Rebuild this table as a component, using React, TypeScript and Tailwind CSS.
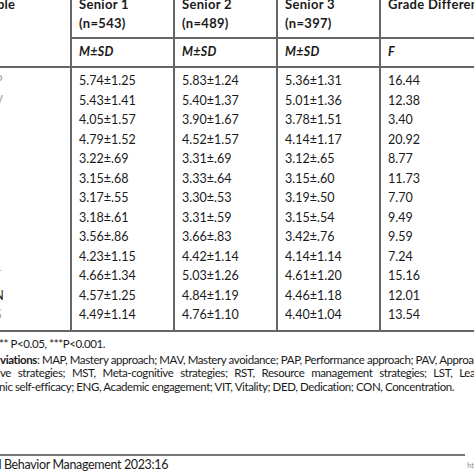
import React from "react";

const rows: { label: string; lc: string; v: string[] }[] = [
  { label: "MAP", lc: "-ml-[25px] text-[#aaa]", v: ["5.74±1.25", "5.83±1.24", "5.36±1.31", "16.44"] },
  { label: "MAV", lc: "-ml-[25px] text-[#aaa]", v: ["5.43±1.41", "5.40±1.37", "5.01±1.36", "12.38"] },
  { label: "PAP", lc: "-ml-[40px]", v: ["4.05±1.57", "3.90±1.67", "3.78±1.51", "3.40"] },
  { label: "PAV", lc: "-ml-[40px]", v: ["4.79±1.52", "4.52±1.57", "4.14±1.17", "20.92"] },
  { label: "CST", lc: "-ml-[40px]", v: ["3.22±.69", "3.31±.69", "3.12±.65", "8.77"] },
  { label: "MST", lc: "-ml-[40px]", v: ["3.15±.68", "3.33±.64", "3.15±.60", "11.73"] },
  { label: "RST", lc: "-ml-[40px]", v: ["3.17±.55", "3.30±.53", "3.19±.50", "7.70"] },
  { label: "LST", lc: "-ml-[40px]", v: ["3.18±.61", "3.31±.59", "3.15±.54", "9.49"] },
  { label: "ASE", lc: "-ml-[40px]", v: ["3.56±.86", "3.66±.83", "3.42±.76", "9.59"] },
  { label: "ENG", lc: "-ml-[40px]", v: ["4.23±1.15", "4.42±1.14", "4.14±1.14", "7.24"] },
  { label: "VIT", lc: "-ml-[18px] text-[#bbb]", v: ["4.66±1.34", "5.03±1.26", "4.61±1.20", "15.16"] },
  { label: "CON", lc: "-ml-[24px]", v: ["4.57±1.25", "4.84±1.19", "4.46±1.18", "12.01"] },
  { label: "DES", lc: "-ml-[22px] text-[#999]", v: ["4.49±1.14", "4.76±1.10", "4.40±1.04", "13.54"] },
];

const heads = [
  ["Senior 1", "(n=543)"],
  ["Senior 2", "(n=489)"],
  ["Senior 3", "(n=397)"],
  ["Grade Differences", ""],
];

const line = "border-[#666]";

export default function App() {
  return (
    <div className="w-[474px] h-[474px] overflow-hidden bg-white text-[#1a1a1a] font-['Lato','Liberation_Sans',sans-serif] flex flex-col">
      {/* table */}
      <div className="grid grid-cols-[70px_103px_103px_103px_200px] shrink-0">
        <div className={`row-span-2 border-b-2 ${line} h-[68px] overflow-hidden`}>
          <div className="-mt-[5px] -ml-[34px] text-[13px] tracking-[0.3px] font-bold leading-[19px] whitespace-nowrap">Variable</div>
        </div>
        {heads.map((h, i) => (
          <div key={i} className={`h-[39px] border-l-2 border-b-2 ${line} pl-[7px] overflow-hidden`}>
            <div className="-mt-[5px] text-[13px] tracking-[0.3px] font-bold leading-[19px] whitespace-nowrap">
              <div>{h[0]}</div>
              <div>{h[1]}</div>
            </div>
          </div>
        ))}
        {["M±SD", "M±SD", "M±SD", "F"].map((t, i) => (
          <div key={i} className={`h-[29px] border-l-2 border-b-2 ${line} pl-[7px] flex items-center text-[12.5px] tracking-[0.3px] font-bold italic`}>
            {t}
          </div>
        ))}
        <div className={`border-b-2 ${line} pt-[3px] pb-[5px] overflow-hidden`}>
          {rows.map((r, i) => (
            <div key={i} className={`h-[19.5px] leading-[19.5px] text-[12.5px] whitespace-nowrap ${r.lc}`}>
              {r.label}
            </div>
          ))}
        </div>
        {[0, 1, 2, 3].map((c) => (
          <div key={c} className={`border-l-2 border-b-2 ${line} pt-[3px] pb-[5px] pl-[7px]`}>
            {rows.map((r, i) => (
              <div key={i} className="h-[19.5px] leading-[19.5px] text-[12.5px] whitespace-nowrap">
                {r.v[c]}
              </div>
            ))}
          </div>
        ))}
      </div>

      {/* notes */}
      <div className="pt-[2px] text-[11.5px] tracking-[-0.4px] leading-[13.5px] whitespace-nowrap overflow-hidden">
        <div className="-ml-[1px] h-[19px] leading-[19px]">** P&lt;0.05, ***P&lt;0.001.</div>
        <div className="h-[13.5px]">
          <span className="font-bold">viations</span>: MAP, Mastery approach; MAV, Mastery avoidance; PAP, Performance approach; PAV, Approach
        </div>
        <div className="h-[13.5px] [word-spacing:4.2px]">
          ve strategies; MST, Meta-cognitive strategies; RST, Resource management strategies; LST, Learning
        </div>
        <div className="h-[13.5px] -ml-[1px]">
          nic self-efficacy; ENG, Academic engagement; VIT, Vitality; DED, Dedication; CON, Concentration.
        </div>
      </div>

      <div className="flex-1" />

      {/* footer */}
      <div className="shrink-0">
        <div className="w-[465px] h-[2px] bg-[#777]" />
        <div className="flex items-center justify-between h-[18px] overflow-hidden">
          <div className="-ml-[18px] text-[12.5px] tracking-[-0.35px] whitespace-nowrap">and Behavior Management 2023:16</div>
          <div className="text-[7px] text-[#888] whitespace-nowrap translate-x-[2px]">htt</div>
        </div>
      </div>
    </div>
  );
}
